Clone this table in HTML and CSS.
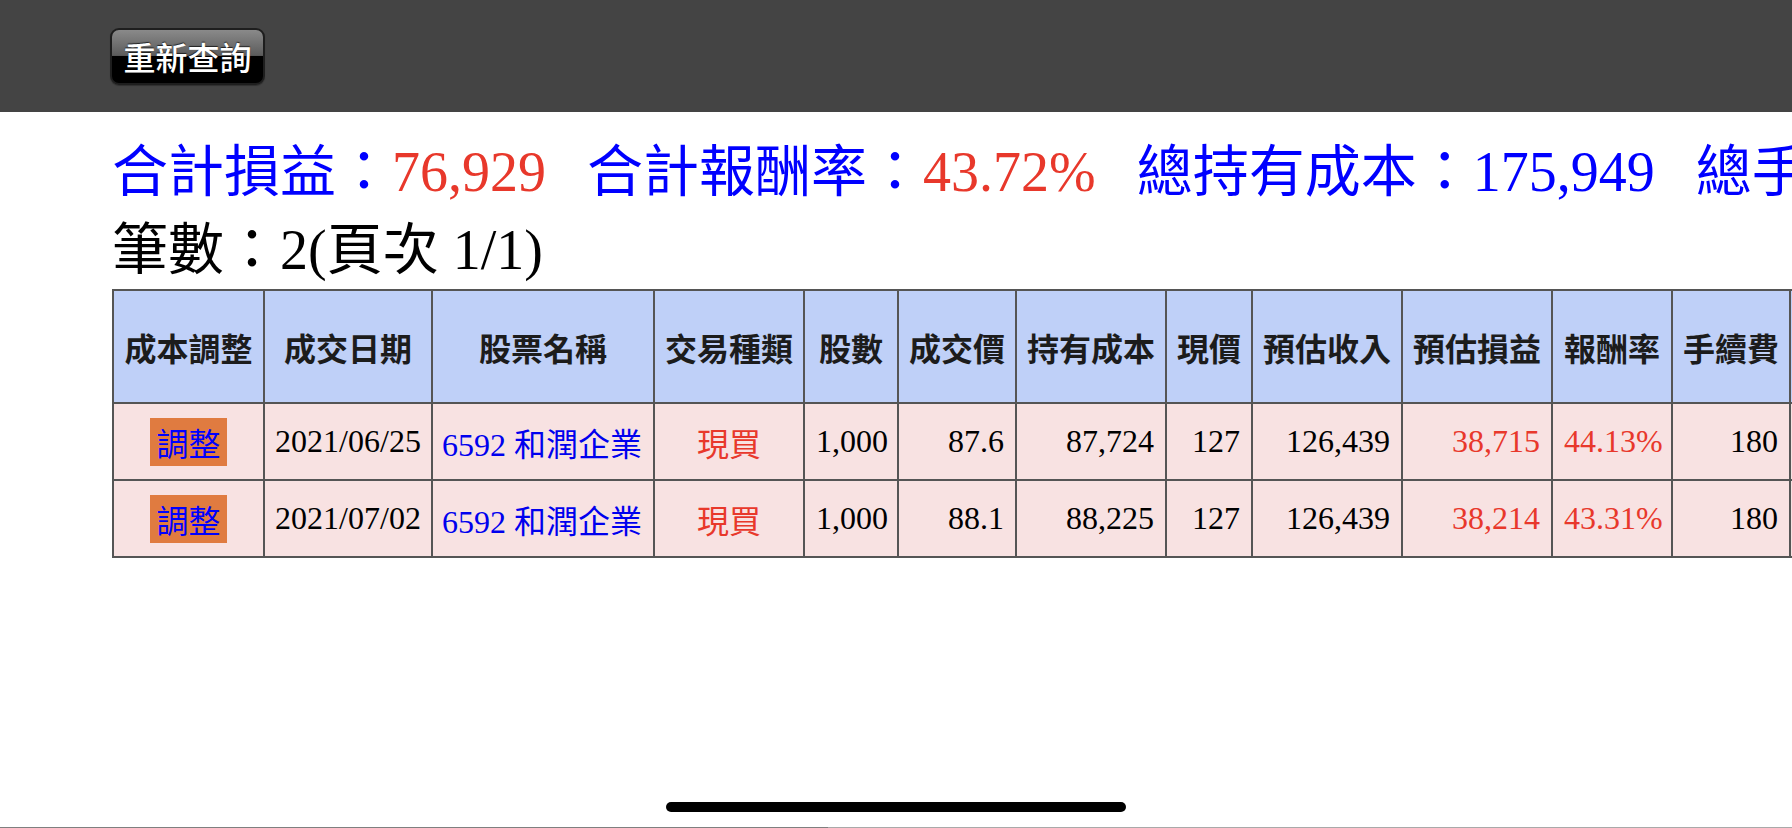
FILE: index.html
```html
<!DOCTYPE html>
<html lang="zh-Hant">
<head>
<meta charset="utf-8">
<title>庫存損益</title>
<link rel="stylesheet" href="styles.css">
</head>
<body>
<div class="topbar">
  <button class="requery">重新查詢</button>
</div>
<main class="content">
  <div class="summary">
    <span class="label">合計損益：</span><span class="value">76,929</span>
    <span class="label">合計報酬率：</span><span class="value">43.72%</span>
    <span class="label">總持有成本：</span><span class="value blue">175,949</span>
    <span class="label">總手續費：</span><span class="value blue">360</span>
  </div>
  <div class="count">筆數：2(頁次 1/1)</div>
  <table class="grid">
    <colgroup>
      <col class="w-adj"><col class="w-date"><col class="w-name"><col class="w-type"><col class="w-qty"><col class="w-price"><col class="w-cost"><col class="w-now"><col class="w-income"><col class="w-pl"><col class="w-rate"><col class="w-fee"><col class="w-tax">
    </colgroup>
    <thead>
      <tr>
        <th>成本調整</th><th>成交日期</th><th>股票名稱</th><th>交易種類</th><th>股數</th><th>成交價</th><th>持有成本</th><th>現價</th><th>預估收入</th><th>預估損益</th><th>報酬率</th><th>手續費</th><th>交易稅</th>
      </tr>
    </thead>
    <tbody>
      <tr>
        <td class="c"><span class="adj">調整</span></td>
        <td class="c">2021/06/25</td>
        <td class="name">6592 和潤企業</td>
        <td class="c red">現買</td>
        <td class="r">1,000</td>
        <td class="r">87.6</td>
        <td class="r">87,724</td>
        <td class="r">127</td>
        <td class="r">126,439</td>
        <td class="r red">38,715</td>
        <td class="r red">44.13%</td>
        <td class="r">180</td>
        <td class="r">380</td>
      </tr>
      <tr>
        <td class="c"><span class="adj">調整</span></td>
        <td class="c">2021/07/02</td>
        <td class="name">6592 和潤企業</td>
        <td class="c red">現買</td>
        <td class="r">1,000</td>
        <td class="r">88.1</td>
        <td class="r">88,225</td>
        <td class="r">127</td>
        <td class="r">126,439</td>
        <td class="r red">38,214</td>
        <td class="r red">43.31%</td>
        <td class="r">180</td>
        <td class="r">381</td>
      </tr>
    </tbody>
  </table>
</main>
<div class="home-indicator"></div>
<div class="screen-edge"><span class="edge-left"></span><span class="edge-right"></span></div>
</body>
</html>
```
FILE: styles.css
```css
html, body {
  margin: 0;
  padding: 0;
  overflow: hidden;
  background: #ffffff;
}
body {
  width: 1792px;
  height: 828px;
  position: relative;
  font-family: "Liberation Serif", "Noto Sans CJK TC", serif;
}
.topbar {
  height: 112px;
  background: #444444;
  display: flex;
  align-items: center;
  padding-left: 110px;
  box-sizing: border-box;
}
.requery {
  width: 155px;
  height: 57px;
  margin-top: 1px;
  border: 2px solid #1e1e1e;
  border-radius: 9px;
  background: linear-gradient(to bottom, #8a8a8a 0%, #5c5c5c 48%, #000000 50%, #000000 100%);
  color: #ffffff;
  font-family: "Noto Sans CJK TC", "Noto Sans", sans-serif;
  font-size: 32px;
  font-weight: 500;
  line-height: 1;
  padding: 0 0 2px 0;
  text-shadow: 0 -1px 1px rgba(0, 0, 0, 0.7);
  box-shadow: 0 1px 1px rgba(0, 0, 0, 0.3);
}
.content {
  padding: 21px 0 0 112px;
}
.summary,
.count {
  font-size: 56px;
  line-height: 78px;
  white-space: nowrap;
}
.summary .label {
  color: #0000ff;
}
.summary .value {
  color: #e8382b;
  margin-right: 27px;
}
.summary .value.blue {
  color: #0000ff;
}
.count {
  color: #000000;
}
.grid {
  margin-top: 0;
  border-collapse: collapse;
  table-layout: fixed;
  width: 1797px;
  font-size: 32px;
  white-space: nowrap;
}
.w-adj { width: 151px; }
.w-date { width: 168px; }
.w-name { width: 222px; }
.w-type { width: 150px; }
.w-qty { width: 94px; }
.w-price { width: 118px; }
.w-cost { width: 150px; }
.w-now { width: 86px; }
.w-income { width: 150px; }
.w-pl { width: 150px; }
.w-rate { width: 120px; }
.w-fee { width: 118px; }
.w-tax { width: 120px; }
.grid th,
.grid td {
  border: 2px solid #555555;
  padding: 0 11px;
  overflow: hidden;
}
.grid th {
  height: 111px;
  background: #bfd0f8;
  color: #1c1c1c;
  font-family: "Noto Sans CJK TC", "Noto Sans", sans-serif;
  font-weight: 700;
  text-align: center;
  padding: 0;
}
.grid td {
  height: 75px;
  background: #f8e2e2;
  color: #000000;
}
.grid td.c {
  text-align: center;
  padding: 0;
}
.grid td.r {
  text-align: right;
}
.grid td.name {
  color: #0000ee;
  text-align: left;
  padding-left: 9px;
}
.grid td.red {
  color: #e8382b;
}
.adj {
  display: inline-block;
  background: #e07b40;
  color: #0000ff;
  font-family: "Noto Sans CJK TC", sans-serif;
  font-size: 32px;
  line-height: 48px;
  padding: 0 6px;
  vertical-align: middle;
}
.home-indicator {
  position: absolute;
  left: 666px;
  top: 802px;
  width: 460px;
  height: 10px;
  border-radius: 5px;
  background: #000000;
}
.screen-edge {
  position: absolute;
  left: 0;
  bottom: 0;
  width: 100%;
  height: 1px;
  display: flex;
}
.edge-left {
  width: 828px;
  background: #7f7f7f;
}
.edge-right {
  flex: 1;
  background: #a9a9a9;
}
```
